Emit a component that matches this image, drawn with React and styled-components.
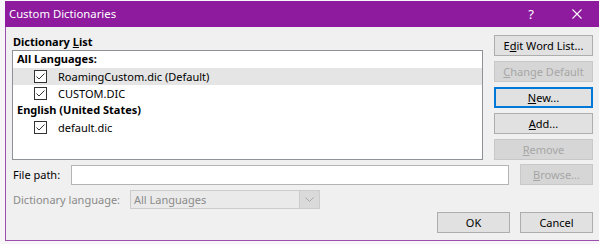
import React from "react";
import styled, { createGlobalStyle } from "styled-components";

const Global = createGlobalStyle`
  html, body { margin: 0; padding: 0; }
  body {
    background: #f7f5f8;
    font-family: "Segoe UI", "Noto Sans", sans-serif;
    font-size: 11px;
    color: #000;
    overflow: hidden;
    width: 599px;
    height: 244px;
  }
`;

const Dialog = styled.div`
  margin: 1px 0 0 5px;
  width: 595px;
  height: 240px;
  box-sizing: border-box;
  border: 1px solid #9c4fae;
  border-top: none;
  background: #f0f0f0;
  display: flex;
  flex-direction: column;
`;

const TitleBar = styled.div`
  height: 26px;
  margin: 0 -1px;
  background: #8e1a9e;
  display: flex;
  align-items: center;
  color: #fff;
`;

const Title = styled.div`
  flex: 1;
  padding-left: 4px;
  font-size: 11.3px;
  line-height: 26px;
`;

const CaptionButton = styled.div`
  width: 46px;
  height: 26px;
  display: flex;
  align-items: center;
  justify-content: center;
  font-size: 12px;
  color: #fff;
`;

const Body = styled.div`
  flex: 1;
  padding: 8px 6px 7px 6px;
  display: flex;
  flex-direction: column;
`;

const TopSection = styled.div`
  display: flex;
  gap: 11px;
  height: 125px;
`;

const LeftCol = styled.div`
  flex: 1;
  display: flex;
  flex-direction: column;
`;

const GroupLabel = styled.div`
  height: 15px;
  line-height: 14px;
  font-weight: bold;
  padding-left: 1px;
`;

const ListBox = styled.div`
  height: 110px;
  box-sizing: border-box;
  border: 1px solid #8e9196;
  background: #fff;
`;

const ListHeader = styled.div`
  height: 17px;
  line-height: 16px;
  font-weight: bold;
  padding-left: 4px;
`;

const ListItem = styled.div`
  height: 17px;
  display: flex;
  align-items: center;
  padding-left: 21px;
  gap: 11px;
  background: ${(p) => (p.$selected ? "#e5e5e5" : "transparent")};
`;

const ButtonCol = styled.div`
  width: 99px;
  display: flex;
  flex-direction: column;
  gap: 5px;
`;

const Button = styled.div`
  box-sizing: border-box;
  height: 21px;
  width: ${(p) => p.$width || "100%"};
  display: flex;
  align-items: center;
  justify-content: center;
  background: ${(p) => (p.$disabled ? "#d6d6d6" : "#e1e1e1")};
  border: ${(p) =>
    p.$focused ? "2px solid #0078d7" : p.$disabled ? "1px solid #c8c8c8" : "1px solid #adadad"};
  color: ${(p) => (p.$disabled ? "#a6a6a6" : "#000")};
  font-size: 11px;
  line-height: 1;
  padding-bottom: 1px;
`;

const Row = styled.div`
  display: flex;
  align-items: center;
  flex: ${(p) => (p.$grow ? 1 : "none")};
  gap: ${(p) => p.$gap || "0"};
  margin-top: ${(p) => p.$mt || "0"};
  justify-content: ${(p) => p.$justify || "flex-start"};
`;

const FieldLabel = styled.div`
  width: ${(p) => p.$width};
  padding-left: 1px;
  color: ${(p) => (p.$disabled ? "#8a8a8a" : "#000")};
`;

const TextInput = styled.div`
  flex: 1;
  height: 20px;
  box-sizing: border-box;
  border: 1px solid #b4b4b4;
  background: #fff;
`;

const Combo = styled.div`
  width: 190px;
  height: 19px;
  box-sizing: border-box;
  border: 1px solid #cccccc;
  background: #eaeaea;
  display: flex;
  align-items: center;
  color: #8a8a8a;
`;

const ComboText = styled.div`
  flex: 1;
  padding-left: 3px;
`;

const ComboArrow = styled.div`
  width: 19px;
  height: 17px;
  background: #dadada;
  border-left: 1px solid #cccccc;
  display: flex;
  align-items: center;
  justify-content: center;
`;

const Key = styled.span`
  text-decoration: underline;
  text-underline-offset: 1px;
`;

const HelpGlyph = styled.span`
  font-size: 13px;
`;

const CheckBox = () => (
  <svg width="13" height="13" viewBox="0 0 13 13">
    <rect x="0.5" y="0.5" width="12" height="12" fill="#fff" stroke="#333" />
    <path d="M2.5 6.5 L5 9 L10.5 3.5" fill="none" stroke="#333" strokeWidth="1" />
  </svg>
);

const CloseIcon = () => (
  <svg width="10" height="10" viewBox="0 0 10 10">
    <path d="M0.5 0.5 L9.5 9.5 M9.5 0.5 L0.5 9.5" stroke="#fff" strokeWidth="1.1" />
  </svg>
);

const Chevron = () => (
  <svg width="9" height="6" viewBox="0 0 9 6">
    <path d="M0.5 0.5 L4.5 4.5 L8.5 0.5" fill="none" stroke="#a8a8a8" strokeWidth="1" />
  </svg>
);

export default function App() {
  return (
    <>
      <Global />
      <Dialog>
        <TitleBar>
          <Title>Custom Dictionaries</Title>
          <CaptionButton>
            <HelpGlyph>?</HelpGlyph>
          </CaptionButton>
          <CaptionButton>
            <CloseIcon />
          </CaptionButton>
        </TitleBar>
        <Body>
          <TopSection>
            <LeftCol>
              <GroupLabel>
                Dictionary <Key>L</Key>ist
              </GroupLabel>
              <ListBox>
                <ListHeader>All Languages:</ListHeader>
                <ListItem $selected>
                  <CheckBox />
                  <span>RoamingCustom.dic (Default)</span>
                </ListItem>
                <ListItem>
                  <CheckBox />
                  <span>CUSTOM.DIC</span>
                </ListItem>
                <ListHeader>English (United States)</ListHeader>
                <ListItem>
                  <CheckBox />
                  <span>default.dic</span>
                </ListItem>
              </ListBox>
            </LeftCol>
            <ButtonCol>
              <Button>
                E<Key>d</Key>it Word List...
              </Button>
              <Button $disabled>
                <Key>C</Key>hange Default
              </Button>
              <Button $focused>
                <Key>N</Key>ew...
              </Button>
              <Button>
                <Key>A</Key>dd...
              </Button>
              <Button $disabled>
                <Key>R</Key>emove
              </Button>
            </ButtonCol>
          </TopSection>
          <Row $mt="4px" $gap="11px">
            <Row $grow>
              <FieldLabel $width="58px">File path:</FieldLabel>
              <TextInput />
            </Row>
            <Button $disabled $width="73px">
              <Key>B</Key>rowse...
            </Button>
          </Row>
          <Row $mt="5px">
            <FieldLabel $width="117px" $disabled>
              Dictionary language:
            </FieldLabel>
            <Combo>
              <ComboText>All Languages</ComboText>
              <ComboArrow>
                <Chevron />
              </ComboArrow>
            </Combo>
          </Row>
          <Row $mt="3px" $gap="10px" $justify="flex-end">
            <Button $width="73px">OK</Button>
            <Button $width="73px">Cancel</Button>
          </Row>
        </Body>
      </Dialog>
    </>
  );
}
